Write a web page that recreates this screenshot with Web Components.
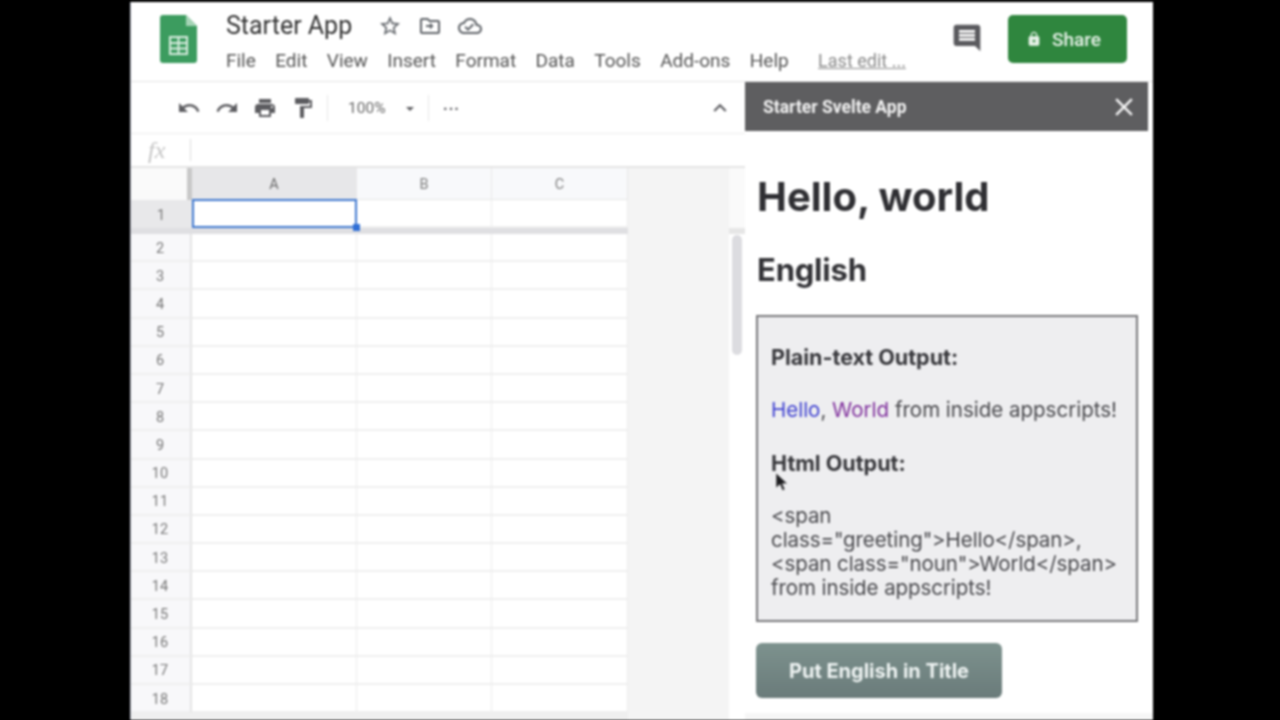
<!doctype html>
<html>
<head>
<meta charset="utf-8">
<title>Starter App</title>
<style>
  html, body { margin: 0; height: 100%; background: #000; overflow: hidden; }
  body { font-family: Inter, "Liberation Sans", Arial, sans-serif; }
</style>
</head>
<body>
<video-frame>
  <doc-header slot="top"></doc-header>
  <sheet-pane slot="left"></sheet-pane>
  <side-panel slot="right" heading="Starter Svelte App">
    <h-one>Hello, world</h-one>
    <h-two>English</h-two>
    <output-box></output-box>
    <action-button>Put English in Title</action-button>
  </side-panel>
</video-frame>

<script>
const icons = {
  undo: 'M12.5 8c-2.65 0-5.05.99-6.9 2.6L2 7v9h9l-3.62-3.62c1.39-1.16 3.16-1.88 5.12-1.88 3.54 0 6.55 2.31 7.6 5.5l2.37-.78C21.08 11.03 17.15 8 12.5 8z',
  redo: 'M18.4 10.6C16.55 8.99 14.15 8 11.5 8c-4.65 0-8.58 3.03-9.96 7.22L3.9 16c1.05-3.19 4.05-5.5 7.6-5.5 1.95 0 3.73.72 5.12 1.88L13 16h9V7l-3.6 3.6z',
  print: 'M19 8H5c-1.66 0-3 1.34-3 3v6h4v4h12v-4h4v-6c0-1.66-1.34-3-3-3zm-3 11H8v-5h8v5zm3-7c-.55 0-1-.45-1-1s.45-1 1-1 1 .45 1 1-.45 1-1 1zm-1-9H6v4h12V3z',
  paint: 'M18 4V3c0-.55-.45-1-1-1H5c-.55 0-1 .45-1 1v4c0 .55.45 1 1 1h12c.55 0 1-.45 1-1V6h1v4H9v11c0 .55.45 1 1 1h2c.55 0 1-.45 1-1v-9h8V4h-3z',
  star: 'M22 9.24l-7.19-.62L12 2 9.19 8.63 2 9.24l5.46 4.73L5.82 21 12 17.27 18.18 21l-1.63-7.03L22 9.24zM12 15.4l-3.76 2.27 1-4.28-3.32-2.88 4.38-.38L12 6.1l1.71 4.04 4.38.38-3.32 2.88 1 4.28L12 15.4z',
  folder: 'M20 6h-8l-2-2H4c-1.1 0-2 .9-2 2v12c0 1.1.9 2 2 2h16c1.1 0 2-.9 2-2V8c0-1.1-.9-2-2-2zm0 12H4V6h5.17l2 2H20v10zM12 11H8v2h4v2.5l3.5-3.5L12 8.5V11z',
  cloud: 'M19.35 10.04C18.67 6.59 15.64 4 12 4 9.11 4 6.6 5.64 5.35 8.04 2.34 8.36 0 10.91 0 14c0 3.31 2.69 6 6 6h13c2.76 0 5-2.24 5-5 0-2.64-2.05-4.78-4.65-4.96zM19 18H6c-2.21 0-4-1.79-4-4 0-2.05 1.53-3.76 3.56-3.97l1.07-.11.5-.95C8.08 7.14 9.94 6 12 6c2.62 0 4.88 1.86 5.39 4.43l.3 1.5 1.53.11c1.56.1 2.78 1.41 2.78 2.96 0 1.65-1.35 3-3 3zm-9-3.82l-2.09-2.09L6.5 13.5 10 17l6.01-6.01-1.41-1.41z',
  comment: 'M21.99 4c0-1.1-.89-2-1.99-2H4c-1.1 0-2 .9-2 2v12c0 1.1.9 2 2 2h14l4 4-.01-18zM18 14H6v-2h12v2zm0-3H6V9h12v2zm0-3H6V6h12v2z',
  lock: 'M18 8h-1V6c0-2.76-2.24-5-5-5S7 3.24 7 6v2H6c-1.1 0-2 .9-2 2v10c0 1.1.9 2 2 2h12c1.1 0 2-.9 2-2V10c0-1.1-.9-2-2-2zm-6 9c-1.1 0-2-.9-2-2s.9-2 2-2 2 .9 2 2-.9 2-2 2zm3.1-9H8.9V6c0-1.71 1.39-3.1 3.1-3.1 1.71 0 3.1 1.39 3.1 3.1v2z',
  close: 'M19 6.41L17.59 5 12 10.59 6.41 5 5 6.41 10.59 12 5 17.59 6.41 19 12 13.41 17.59 19 19 17.59 13.41 12z',
  less: 'M12 8l-6 6 1.41 1.41L12 10.83l4.59 4.58L18 14z'
}

class BaseEl extends HTMLElement {
  connectedCallback() {
    if (this.shadowRoot) return
    this.attachShadow({ mode: 'open' }).innerHTML = this.render()
  }
}

class GIcon extends BaseEl {
  render() {
    const s = this.getAttribute('size') || 24
    return `<style>:host{display:inline-flex;width:${s}px;height:${s}px;color:inherit}svg{width:100%;height:100%}</style>
      <svg viewBox="0 0 24 24"><path fill="currentColor" d="${icons[this.getAttribute('name')]}"/></svg>`
  }
}

class VideoFrame extends BaseEl {
  render() {
    return `<style>
      :host{display:block;width:1023px;height:718px;margin:2px 0 0 130px;background:#fff;overflow:hidden;position:relative;filter:blur(.8px);box-sizing:border-box;border-left:1px solid #a9aebb}
      .row{display:flex;height:638px;margin-left:-1px}
    </style>
    <slot name="top"></slot>
    <div class="row"><slot name="left"></slot><slot name="right"></slot></div>
    <mouse-cursor></mouse-cursor>`
  }
}

class DocHeader extends BaseEl {
  render() {
    const menu = ['File','Edit','View','Insert','Format','Data','Tools','Add-ons','Help']
    return `<style>
      :host{display:flex;height:79px;border-bottom:1px solid #e4e4e4;margin-left:-1px;font-family:Roboto,"Liberation Sans",sans-serif;color:#444}
      .logo{width:37px;height:48px;margin:13px 29px 0 30px;flex:none}
      .mid{flex:1;min-width:0}
      .title{display:flex;align-items:center;height:24px;margin-top:11px;font-size:25px;color:#333}
      .title span{width:152px}
      .title g-icon{color:#5f6368;margin:2px 16px 0 0}
      nav{display:flex;font-size:19px;margin-top:12px;line-height:24px;color:#555}
      nav span{margin-right:19.4px}
      nav a{margin-left:10px;font-size:18px;color:#8a8a8a;text-decoration:underline}
      .comment{color:#5a5a5e;margin:20px 25px 0 0}
      button{width:119px;height:48px;margin:13px 26px 0 0;padding:0 0 0 18px;border:0;border-radius:5px;background:#2f863e;color:#e8f2e9;display:flex;align-items:center;gap:10px;font:500 19px Roboto,"Liberation Sans",sans-serif;flex:none}
    </style>
    <svg class="logo" viewBox="0 0 37 48">
      <path fill="#3c9c5f" d="M3 0h23l11 11v34a3 3 0 0 1-3 3H3a3 3 0 0 1-3-3V3a3 3 0 0 1 3-3z"/>
      <path fill="#a5d4b6" d="M26 0l11 11H26z"/>
      <path fill="#d8ecdf" fill-rule="evenodd" d="M9 21h19v19H9zm2 2v4h6.500v-4zm8.500 0v4H26v-4zM11 29v3.500h6.500V29zm8.500 0v3.500H26V29zM11 34.500V38h6.500v-3.500zm8.500 0V38H26v-3.500z"/>
    </svg>
    <div class="mid">
      <div class="title"><span>Starter App</span>
        <g-icon name="star" size="24"></g-icon><g-icon name="folder" size="24"></g-icon><g-icon name="cloud" size="24"></g-icon></div>
      <nav>${menu.map(m => `<span>${m}</span>`).join('')}<a>Last edit ...</a></nav>
    </div>
    <g-icon class="comment" name="comment" size="32"></g-icon>
    <button><g-icon name="lock" size="16"></g-icon>Share</button>`
  }
}

class SheetToolbar extends BaseEl {
  render() {
    return `<style>
      :host{display:flex;align-items:center;height:51px;padding-left:47px;border-bottom:1px solid #ececec;color:#5c5c60;font-family:Roboto,"Liberation Sans",sans-serif;font-size:15.500px}
      g-icon{margin-right:14px}
      g-icon:nth-of-type(4){margin-right:0}
      i{width:1px;height:26px;background:#e6e6e6;margin:0 20px 0 12px}
      .zoom{width:40px;color:#666}
      .arrow{width:0;height:0;border:4.500px solid transparent;border-top-color:#5c5c60;border-bottom:0;margin:2px 14px 0 18px}
      .dots{letter-spacing:1px;font-weight:700;margin:-7px 0 0 -6px;font-size:16px}
      .less{margin:0 12px 0 auto}
    </style>
    <g-icon name="undo"></g-icon><g-icon name="redo"></g-icon><g-icon name="print"></g-icon><g-icon name="paint"></g-icon>
    <i></i><span class="zoom">100%</span><span class="arrow"></span><i style="margin-left:0"></i><span class="dots">...</span>
    <g-icon class="less" name="less" size="26"></g-icon>`
  }
}

class FormulaBar extends BaseEl {
  render() {
    return `<style>
      :host{display:flex;align-items:center;height:32px;border-bottom:2px solid #e4e4e4;color:#c4c4c4}
      em{font:italic 24px "Liberation Serif",serif;margin:0 17px 0 18px;width:25px}
      i{width:1px;height:22px;background:#ddd}
    </style><em>fx</em><i></i>`
  }
}

class SheetGrid extends BaseEl {
  render() {
    let rows = ''
    for (let n = 2; n <= 19; n++) {
      const last = n === 19 ? ' last' : ''
      rows += `<div class="rh${last}">${last ? '' : n}</div><div class="c${last}"></div><div class="c${last}"></div><div class="c${last}"></div>`
    }
    return `<style>
      :host{display:grid;grid-template-columns:62px 165px 135px 136px;grid-auto-rows:28.2px;grid-template-rows:32px 28px 6px;background:#fff;align-content:start;font:14.500px Roboto,"Liberation Sans",sans-serif;color:#777;width:498px}
      div{box-sizing:border-box;display:flex;align-items:center;justify-content:center}
      .h{background:#f8f9fb;border-right:1px solid #e8e8e8;border-bottom:1px solid #e6e6e6;color:#808080;padding-top:2px}
      .corner{background:#fafafa;border-right:5px solid #c8c8c8}
      .h.on{background:#e7e7e9;color:#6c6c6c}
      .rh{background:#f8f8fa;border-right:2px solid #e4e4e4;border-bottom:2px solid #efefef;padding-top:2px}
      .rh.on{background:#e8e8ea;border:0;padding-top:2px}
      .c{border-right:1px solid #ececec;border-bottom:2px solid #efefef}
      .sel{border:2px solid #3f78cf;position:relative;margin:-1px 0 0 0;height:29px}
      .sel b{position:absolute;right:-5px;bottom:-5px;width:7px;height:7px;background:#2f6fd6}
      .frz{grid-column:1/-1;background:#dfdfe2}
      .last{background:#efefef;border:0}
    </style>
    <div class="corner"></div><div class="h on">A</div><div class="h">B</div><div class="h">C</div>
    <div class="rh on">1</div><div class="sel"><b></b></div><div class="c"></div><div class="c"></div>
    <div class="frz"></div>
    ${rows}`
  }
}

class SheetPane extends BaseEl {
  render() {
    return `<style>
      :host{display:flex;flex-direction:column;width:615px;flex:none;overflow:hidden;background:#f4f4f4}
      .wrap{display:flex;flex:1;min-height:0}
      .gut{width:16px;margin-left:auto;background:#fff;display:flex;flex-direction:column}
      .gut u{display:block;height:60px;background:#fafafa}
      .gut s{display:block;height:6px;background:#e6e6e6}
      .gut b{display:block;width:10px;height:120px;margin:1px 0 0 3px;border-radius:5px;background:#dcdce0}
      .toolwrap{background:#fff}
    </style>
    <div class="toolwrap"><sheet-toolbar></sheet-toolbar><formula-bar></formula-bar></div>
    <div class="wrap"><sheet-grid></sheet-grid>
      <div class="gut"><u></u><s></s><b></b></div></div>`
  }
}

class SidePanel extends BaseEl {
  render() {
    return `<style>
      :host{display:flex;flex-direction:column;width:408px;flex:none;background:#fff;overflow:hidden}
      header{display:flex;align-items:center;justify-content:space-between;width:403px;box-sizing:border-box;height:49px;background:#5e5e60;color:#f2f2f2;padding:0 9px 0 18px;font:700 17.500px Roboto,"Liberation Sans",sans-serif;flex:none}
      .body{flex:1;padding-left:11px;border-left:1px solid #f0f0f0;margin-left:-1px}
      footer{height:7px;background:#f6f6f6;flex:none}
    </style>
    <header><span>${this.getAttribute('heading')}</span><g-icon name="close" size="30"></g-icon></header>
    <div class="body"><slot></slot></div>
    <footer></footer>`
  }
}

class HOne extends BaseEl {
  render() {
    return `<style>:host{display:block;margin-top:42px;padding-left:1px;font:700 40px/48px Inter,"Liberation Sans",Arial,sans-serif;color:#2f2f33}</style><slot></slot>`
  }
}

class HTwo extends BaseEl {
  render() {
    return `<style>:host{display:block;margin:29px 0 25px;padding-left:1px;font:700 31px/40px Inter,"Liberation Sans",Arial,sans-serif;letter-spacing:-.2px;color:#333337}</style><slot></slot>`
  }
}

class OutputBox extends BaseEl {
  render() {
    return `<style>
      :host{display:block;width:382px;height:307px;box-sizing:border-box;background:#eeeef0;border:2px solid #77777a;padding:28px 12px 0 13px;font:20.500px/24px Inter,"Liberation Sans",Arial,sans-serif;color:#48484c}
      p{margin:0 0 28px}
      b{color:#38383c;font-weight:700;font-size:21.500px;line-height:24px}
      .greeting{color:#3d3fd0}
      .noun{color:#7f2f9c}
      .code{letter-spacing:-.08px}
    </style>
    <p><b>Plain-text Output:</b></p>
    <p style="margin-bottom:29px"><span class="greeting">Hello</span>, <span class="noun">World</span> from inside appscripts!</p>
    <p style="margin-bottom:28px"><b>Html Output:</b></p>
    <p class="code">&lt;span class="greeting"&gt;Hello&lt;/span&gt;, &lt;span class="noun"&gt;World&lt;/span&gt; from inside appscripts!</p>`
  }
}

class ActionButton extends BaseEl {
  render() {
    return `<style>
      :host{display:flex;align-items:center;justify-content:center;width:246px;height:55px;box-sizing:border-box;padding-top:1px;margin-top:21px;border-radius:6px;background:linear-gradient(#7d928e,#6a7b7a);color:#eef3f2;font:700 20px Inter,"Liberation Sans",Arial,sans-serif}
    </style><slot></slot>`
  }
}

class MouseCursor extends BaseEl {
  render() {
    return `<style>:host{position:absolute;left:644px;top:470px;width:14px;height:22px}</style>
    <svg width="14" height="22" viewBox="0 0 14 22"><path fill="#1d1d20" stroke="#fff" stroke-width=".5" d="M1 1v15l4-3.500 2.500 6 2.500-1-2.500-5.800h5z"/></svg>`
  }
}

customElements.define('g-icon', GIcon)
customElements.define('video-frame', VideoFrame)
customElements.define('doc-header', DocHeader)
customElements.define('sheet-toolbar', SheetToolbar)
customElements.define('formula-bar', FormulaBar)
customElements.define('sheet-grid', SheetGrid)
customElements.define('sheet-pane', SheetPane)
customElements.define('side-panel', SidePanel)
customElements.define('h-one', HOne)
customElements.define('h-two', HTwo)
customElements.define('output-box', OutputBox)
customElements.define('action-button', ActionButton)
customElements.define('mouse-cursor', MouseCursor)
</script>
</body>
</html>
